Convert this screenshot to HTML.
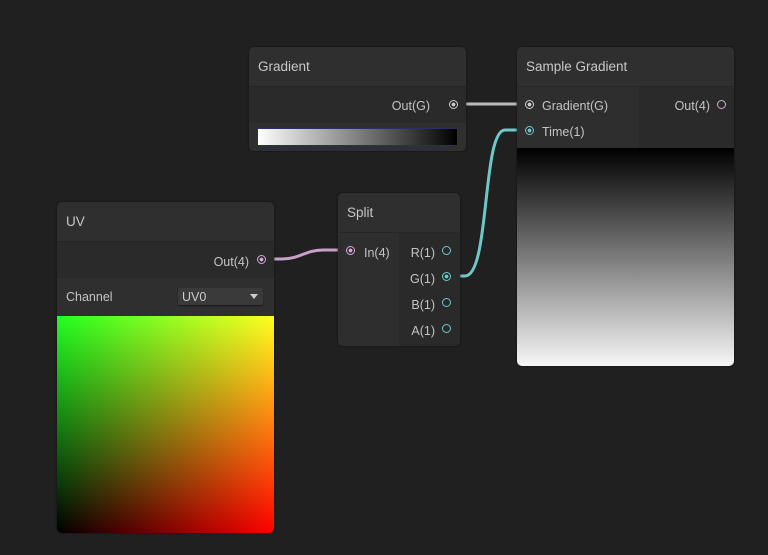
<!DOCTYPE html>
<html><head><style>
body{margin:0;width:768px;height:555px;background:#202020;position:relative;overflow:hidden;font-family:"Liberation Sans",sans-serif;font-size:12.5px;color:#c4c4c4}
.n{position:absolute;background:#2a2a2a;border-radius:5px;overflow:hidden;box-shadow:0 0 2px #111}
.h{background:#2f2f2f;height:39px;line-height:39px;padding-left:9px;font-size:13.5px;color:#c8c8c8;border-bottom:1px solid #262626}
.a{position:absolute}
.p{position:absolute;width:9px;height:9px;border-radius:50%;box-sizing:border-box;border:1.5px solid}
</style></head><body>
<svg class="a" style="left:0;top:0" width="768" height="555">
<path d="M455 104 L529 104" stroke="#bbb" stroke-width="3" fill="none"/>
<path d="M263 259 L282 259 C300 259 305 250 323 250 L350 250" stroke="#c9a0c9" stroke-width="3" fill="none"/>
<path d="M449 276 L465 276 C490 276 482 130 505 130 L529 130" stroke="#6fc8c8" stroke-width="3" fill="none"/>
</svg>
<!-- Gradient -->
<div class="n" style="left:249px;top:47px;width:217px;height:104px">
<div class="h">Gradient</div>
<div class="a" style="right:36px;top:52px">Out(G)</div>
<div class="a" style="left:0;top:76px;width:217px;height:28px;background:#2f2f2f"></div>
<div class="a" style="left:8px;top:81px;width:199px;height:16px;border:1px solid #2c2c66;background:linear-gradient(to right,#fff,#000)"></div>
</div>
<div class="p" style="left:449px;top:100px;border-color:#ccc;background:radial-gradient(#ccc 35%,#2a2a2a 40%)"></div>
<!-- Sample Gradient -->
<div class="n" style="left:517px;top:47px;width:217px;height:319px">
<div class="h">Sample Gradient</div>
<div class="a" style="left:0;top:40px;width:122px;height:61px;background:#2e2e2e"></div>
<div class="a" style="left:25px;top:52px">Gradient(G)</div>
<div class="a" style="left:25px;top:78px">Time(1)</div>
<div class="a" style="right:24px;top:52px">Out(4)</div>
<div class="a" style="left:0;top:101px;width:217px;height:218px;background:linear-gradient(#000,#f6f6f6)"></div>
</div>
<div class="p" style="left:525px;top:100px;border-color:#ccc;background:radial-gradient(#ccc 35%,#2e2e2e 40%)"></div>
<div class="p" style="left:525px;top:126px;border-color:#6fc8c8;background:radial-gradient(#6fc8c8 35%,#2e2e2e 40%)"></div>
<div class="p" style="left:717px;top:100px;border-color:#d7a8d7"></div>
<!-- UV -->
<div class="n" style="left:57px;top:202px;width:217px;height:331px">
<div class="h">UV</div>
<div class="a" style="right:25px;top:53px">Out(4)</div>
<div class="a" style="left:0;top:76px;width:217px;height:38px;background:#2f2f2f"></div>
<div class="a" style="left:9px;top:88px">Channel</div>
<div class="a" style="left:121px;top:86px;width:85px;height:17px;background:#3a3a3a;border-radius:2px;box-shadow:0 1px 1px #1a1a1a"><span style="position:absolute;left:4px;top:2px;color:#ccc">UV0</span><span style="position:absolute;right:5px;top:6px;border-left:4px solid transparent;border-right:4px solid transparent;border-top:5px solid #ccc"></span></div>
<div class="a" style="left:0;top:114px;width:217px;height:217px;background:linear-gradient(to right,#000,#f00)"><div style="width:100%;height:100%;background:linear-gradient(to top,#000,#2f2);mix-blend-mode:screen"></div></div>
</div>
<div class="p" style="left:257px;top:255px;border-color:#d7a8d7;background:radial-gradient(#d7a8d7 35%,#2a2a2a 40%)"></div>
<!-- Split -->
<div class="n" style="left:338px;top:193px;width:122px;height:153px">
<div class="h">Split</div>
<div class="a" style="left:0;top:40px;width:61px;height:113px;background:#2e2e2e"></div>
<div class="a" style="left:26px;top:53px">In(4)</div>
<div class="a" style="right:25px;top:53px">R(1)</div>
<div class="a" style="right:25px;top:79px">G(1)</div>
<div class="a" style="right:25px;top:105px">B(1)</div>
<div class="a" style="right:25px;top:131px">A(1)</div>
</div>
<div class="p" style="left:346px;top:246px;border-color:#d7a8d7;background:radial-gradient(#d7a8d7 35%,#2e2e2e 40%)"></div>
<div class="p" style="left:442px;top:246px;border-color:#6fc8c8"></div>
<div class="p" style="left:442px;top:272px;border-color:#6fc8c8;background:radial-gradient(#6fc8c8 35%,#2a2a2a 40%)"></div>
<div class="p" style="left:442px;top:298px;border-color:#6fc8c8"></div>
<div class="p" style="left:442px;top:324px;border-color:#6fc8c8"></div>
</body></html>
